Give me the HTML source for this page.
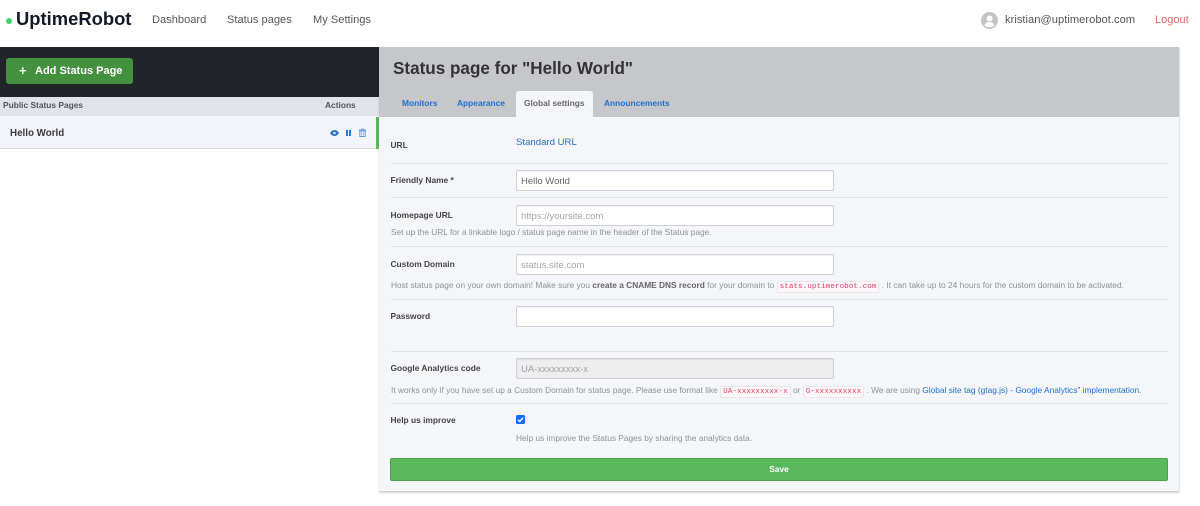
<!DOCTYPE html>
<html><head><meta charset="utf-8"><style>
*{box-sizing:border-box}
html,body{margin:0;padding:0;width:1200px;height:506px;overflow:hidden;background:#fff;font-family:"Liberation Sans",sans-serif}
.a{position:absolute;white-space:nowrap}
.nav{font-size:11.1px;color:#555;top:13px;line-height:14px}
.lab{left:390.5px;font-size:8.4px;font-weight:bold;color:#444;line-height:10px}
.hint{font-size:8.33px;color:#8e9199;line-height:10px}
.hint b{color:#666;font-weight:bold}
.inp{left:516px;width:318px;height:21px;background:#fff;border:1px solid #cfd0d7;border-radius:2px;font-size:9.5px;line-height:21px;padding-left:4px;color:#a4a4a8;box-shadow:inset 0 1px 1px rgba(0,0,0,.06)}
.hr{left:391px;width:777px;height:1px;background:#e3e4e8}
.tab{top:98px;font-size:8.4px;font-weight:bold;color:#1f6fd0;line-height:10px}
code{font-family:"Liberation Mono",monospace;font-size:7.7px;color:#e83e6e;background:#fdf7f9;border:1px solid #ebe6ea;border-radius:2px;padding:1px 2px;margin:0}
a{color:#1f6fd0;text-decoration:none}
</style></head><body>
<div class="a" style="left:6px;top:18px;width:6px;height:6px;border-radius:50%;background:#3bd671"></div>
<div class="a" style="left:16px;top:9px;font-size:18.4px;font-weight:bold;color:#131a26;line-height:20px">UptimeRobot</div>
<div class="a nav" style="left:152px">Dashboard</div>
<div class="a nav" style="left:227px">Status pages</div>
<div class="a nav" style="left:313px">My Settings</div>
<svg class="a" style="left:981px;top:12px" width="17" height="17" viewBox="0 0 17 17"><circle cx="8.500" cy="8.500" r="8.500" fill="#c4c4c6"/><circle cx="8.500" cy="6.500" r="3" fill="#fff"/><path d="M3.500 13.500c.6-2.400 2.500-3.500 5-3.500s4.400 1.100 5 3.500c-1.300 1.200-3 1.800-5 1.800s-3.700-.6-5-1.800z" fill="#fff"/></svg>
<div class="a" style="left:1005px;top:13px;font-size:11.2px;color:#555;line-height:14px">kristian@uptimerobot.com</div>
<div class="a" style="left:1155px;top:13px;font-size:11px;color:#e86a6a;line-height:14px">Logout</div>

<div class="a" style="left:0;top:47px;width:379px;height:50px;background:#212529"></div>
<div class="a" style="left:6px;top:58px;width:127px;height:26px;background:#43903f;border-radius:3px"></div>
<div class="a" style="left:19px;top:63px;font-size:13px;font-weight:bold;color:#fff;line-height:16px">+</div>
<div class="a" style="left:35px;top:64px;font-size:11px;font-weight:bold;color:#fff;line-height:14px">Add Status Page</div>
<div class="a" style="left:0;top:97px;width:379px;height:19px;background:#e0e3ea"></div>
<div class="a" style="left:3px;top:100px;font-size:8.4px;font-weight:bold;color:#555;line-height:10px">Public Status Pages</div>
<div class="a" style="left:325px;top:100px;font-size:8.4px;font-weight:bold;color:#555;line-height:10px">Actions</div>
<div class="a" style="left:0;top:116px;width:379px;height:33px;background:#f3f5fa;border-bottom:1px solid #d8d9dc"></div>
<div class="a" style="left:376px;top:117px;width:3px;height:32px;background:#5cb85c"></div>
<div class="a" style="left:10px;top:127px;font-size:9.8px;font-weight:bold;color:#3a3a3a;line-height:13px">Hello World</div>
<svg class="a" style="left:330px;top:129px" width="9" height="8" viewBox="0 0 9 8"><path d="M0 4c1.200-2 2.700-3 4.500-3S7.800 2 9 4C7.800 6 6.300 7 4.500 7S1.200 6 0 4z" fill="#2f74c9"/><circle cx="4.500" cy="4" r="1.300" fill="#cfe0f5"/></svg>
<svg class="a" style="left:346px;top:129px" width="5" height="8" viewBox="0 0 5 8"><rect x="0" y="1" width="2" height="6" fill="#2f74c9"/><rect x="3" y="1" width="2" height="6" fill="#2f74c9"/></svg>
<svg class="a" style="left:359px;top:128px" width="7" height="9" viewBox="0 0 7 9"><path d="M2.500 .5h2v1h2.500v1H0v-1h2.500z" fill="#6a9ad8"/><rect x=".8" y="3" width="5.400" height="5.500" fill="none" stroke="#6a9ad8"/><path d="M2.500 4v3.500M4.500 4v3.500" stroke="#6a9ad8" stroke-width=".6"/></svg>

<div class="a" style="left:379px;top:47px;width:800px;height:445px;background:#f5f6fa;border-bottom:1px solid #cfcfd1;box-shadow:0 1px 2px rgba(0,0,0,.15),1px 0 1px rgba(0,0,0,.08)"></div>
<div class="a" style="left:379px;top:47px;width:800px;height:70px;background:#c6c7cb"></div>
<div class="a" style="left:393px;top:58px;font-size:17.1px;font-weight:bold;color:#333;line-height:21px">Status page for "Hello World"</div>
<div class="a tab" style="left:402px">Monitors</div>
<div class="a tab" style="left:457px">Appearance</div>
<div class="a" style="left:516px;top:91px;width:77px;height:26px;background:#f5f6fa;border-radius:3px 3px 0 0"></div>
<div class="a tab" style="left:524px;color:#666">Global settings</div>
<div class="a tab" style="left:604px">Announcements</div>

<div class="a lab" style="top:140px">URL</div>
<div class="a" style="left:516px;top:137px;font-size:9.6px;color:#2a6cc4;line-height:12px">Standard URL</div>
<div class="a hr" style="top:163px"></div>
<div class="a lab" style="top:175px">Friendly Name *</div>
<div class="a inp" style="top:170px;color:#666">Hello World</div>
<div class="a hr" style="top:197px"></div>
<div class="a lab" style="top:210px">Homepage URL</div>
<div class="a inp" style="top:205px">https://yoursite.com</div>
<div class="a hint" style="left:391px;top:227px">Set up the URL for a linkable logo / status page name in the header of the Status page.</div>
<div class="a hr" style="top:246px"></div>
<div class="a lab" style="top:259px">Custom Domain</div>
<div class="a inp" style="top:254px">status.site.com</div>
<div class="a hint" style="left:391px;top:280px">Host status page on your own domain! Make sure you <b>create a CNAME DNS record</b> for your domain to <code>stats.uptimerobot.com</code> . It can take up to 24 hours for the custom domain to be activated.</div>
<div class="a hr" style="top:299px"></div>
<div class="a lab" style="top:311px">Password</div>
<div class="a inp" style="top:306px"></div>
<div class="a hr" style="top:351px"></div>
<div class="a lab" style="top:363px">Google Analytics code</div>
<div class="a inp" style="top:358px;background:#eeeeee;color:#a0a0a2">UA-xxxxxxxxx-x</div>
<div class="a hint" style="left:391px;top:385px">It works only if you have set up a Custom Domain for status page. Please use format like <code>UA-xxxxxxxxx-x</code> or <code>G-xxxxxxxxxx</code> . We are using <a href="#">Global site tag (gtag.js) - Google Analytics" implementation</a>.</div>
<div class="a hr" style="top:403px"></div>
<div class="a lab" style="top:415px">Help us improve</div>
<svg class="a" style="left:516px;top:415px" width="9" height="9" viewBox="0 0 9 9"><rect width="9" height="9" rx="1.500" fill="#0d6efd"/><path d="M2 4.700l1.800 1.800L7 2.800" fill="none" stroke="#fff" stroke-width="1.400"/></svg>
<div class="a hint" style="left:516px;top:433px">Help us improve the Status Pages by sharing the analytics data.</div>
<div class="a" style="left:390px;top:458px;width:778px;height:23px;background:#5cb85c;border:1px solid #4a9f4a;border-radius:2px;color:#fff;font-size:8.4px;font-weight:bold;text-align:center;line-height:21px">Save</div>
</body></html>
